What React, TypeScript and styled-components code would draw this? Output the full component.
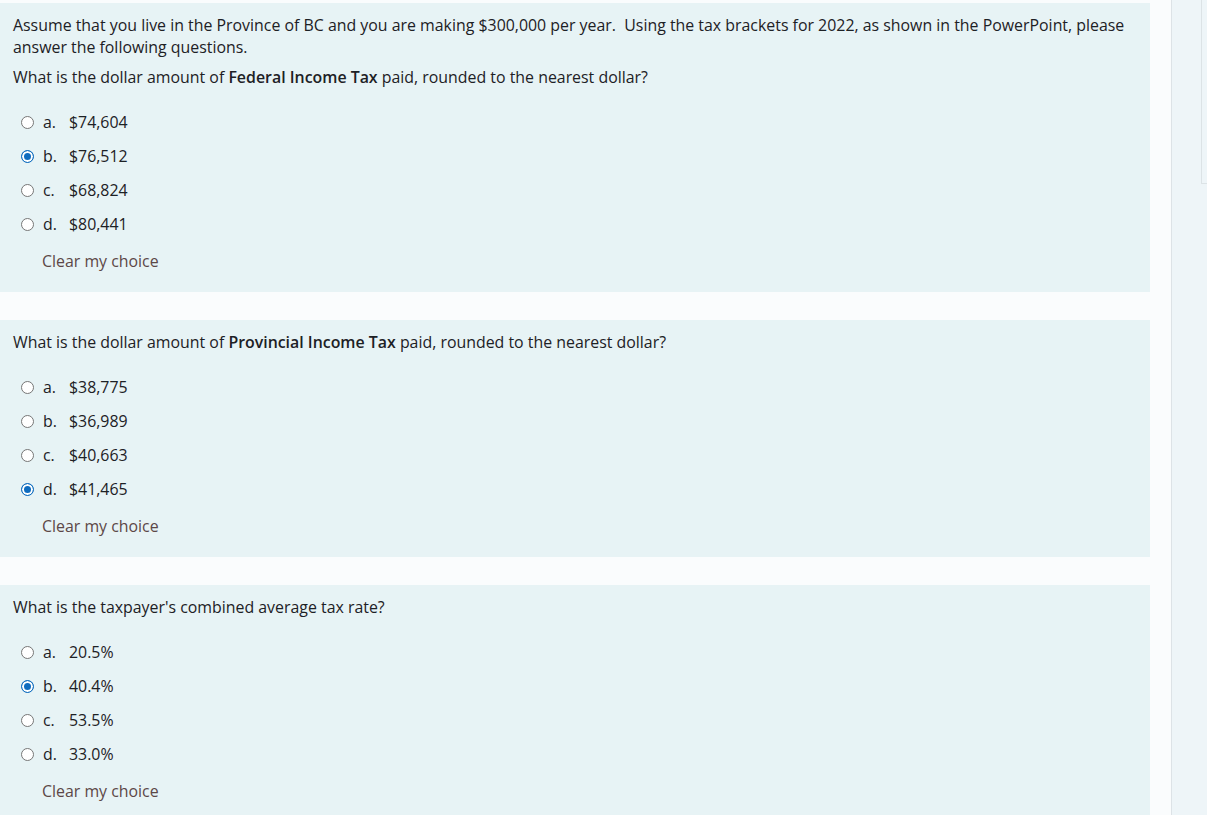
import styled, { createGlobalStyle } from 'styled-components';

interface Question {
  intro?: string;
  before: string;
  bold: string;
  after: string;
  answers: string[];
  selected: number;
}

const QUESTIONS: Question[] = [
  {
    intro:
      'Assume that you live in the Province of BC and you are making $300,000 per year.\u00a0 Using the tax brackets for 2022, as shown in the PowerPoint, please answer the following questions.',
    before: 'What is the dollar amount of ',
    bold: 'Federal Income Tax',
    after: ' paid, rounded to the nearest dollar?',
    answers: ['$74,604', '$76,512', '$68,824', '$80,441'],
    selected: 1,
  },
  {
    before: 'What is the dollar amount of ',
    bold: 'Provincial Income Tax',
    after: ' paid, rounded to the nearest dollar?',
    answers: ['$38,775', '$36,989', '$40,663', '$41,465'],
    selected: 3,
  },
  {
    before: "What is the taxpayer's combined average tax rate?",
    bold: '',
    after: '',
    answers: ['20.5%', '40.4%', '53.5%', '33.0%'],
    selected: 1,
  },
];

const LETTERS = ['a.', 'b.', 'c.', 'd.'];

const GlobalStyle = createGlobalStyle`
  body {
    margin: 0;
    background: #fafcfd;
    color: #1d2125;
    font-family: "Open Sans", "Liberation Sans", sans-serif;
    font-size: 15.9px;
    line-height: 22px;
  }
`;

const Page = styled.div`
  display: flex;
  height: 815px;
  overflow: hidden;
`;

const Main = styled.main`
  flex: 1;
  padding: 3px 21px 0 0;
`;

const Drawer = styled.aside`
  width: 35px;
  border-left: 1px solid #dde3e7;
  background: #eef5f8;
  display: flex;
  justify-content: flex-end;
  align-items: flex-start;
`;

const DrawerBlock = styled.div`
  width: 5px;
  height: 183px;
  border-left: 1px solid #dce3e6;
  border-bottom: 1px solid #dce3e6;
`;

const Card = styled.section`
  background: #e7f3f5;
  padding: 11px 13px 20px;
  margin-bottom: 28px;
`;

const QText = styled.p`
  margin: 0 0 8px;

  &:last-child {
    margin-bottom: 0;
  }

  strong {
    font-weight: 600;
  }
`;

const Answers = styled.div`
  margin-top: 17px;
`;

const Option = styled.label`
  display: flex;
  align-items: center;
  height: 34px;
  padding-left: 8px;
`;

const Radio = styled.span<{ $checked: boolean }>`
  box-sizing: border-box;
  width: 13px;
  height: 13px;
  border-radius: 50%;
  border: 1px solid ${(p) => (p.$checked ? '#0f6cbf' : '#767676')};
  background: ${(p) => (p.$checked ? '#0f6cbf' : '#fff')};
  box-shadow: ${(p) => (p.$checked ? 'inset 0 0 0 2px #fff' : 'none')};
  margin-right: 9px;
`;

const Letter = styled.span`
  width: 26px;
`;

const ClearLink = styled.a`
  display: inline-block;
  margin: 9px 0 0 29px;
  color: #5c4747;
  text-decoration: none;
`;

export default function App() {
  return (
    <Page>
      <GlobalStyle />
      <Main>
        {QUESTIONS.map((q, qi) => (
          <Card key={qi}>
            {q.intro && <QText>{q.intro}</QText>}
            <QText>
              {q.before}
              {q.bold && <strong>{q.bold}</strong>}
              {q.after}
            </QText>
            <Answers>
              {q.answers.map((a, ai) => (
                <Option key={a}>
                  <Radio $checked={ai === q.selected} />
                  <Letter>{LETTERS[ai]}</Letter>
                  {a}
                </Option>
              ))}
            </Answers>
            <ClearLink href="#">Clear my choice</ClearLink>
          </Card>
        ))}
      </Main>
      <Drawer>
        <DrawerBlock />
      </Drawer>
    </Page>
  );
}
